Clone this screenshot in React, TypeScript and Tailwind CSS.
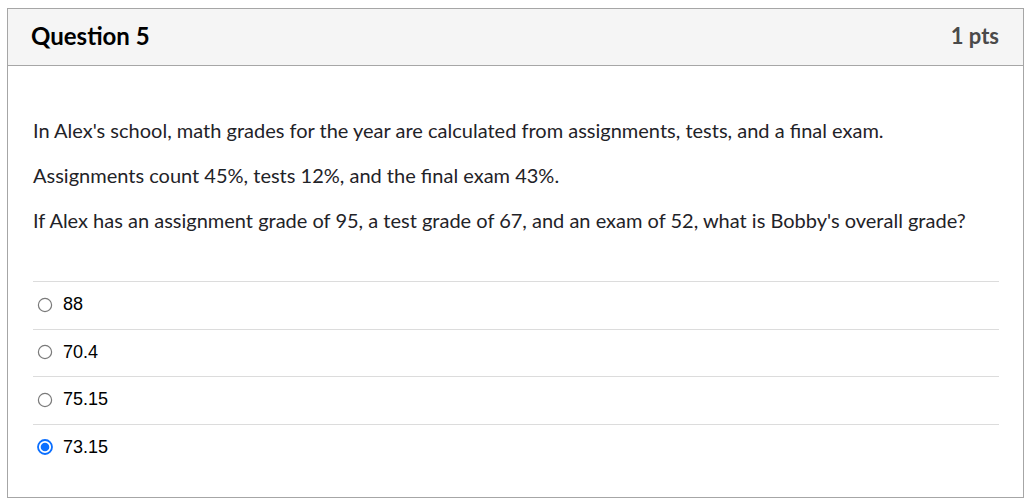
import React from "react";

const answers = [
  { label: "88", checked: false },
  { label: "70.4", checked: false },
  { label: "75.15", checked: false },
  { label: "73.15", checked: true },
];

function Radio({ checked }: { checked: boolean }) {
  return (
    <svg width="16" height="16" viewBox="0 0 16 16" className="shrink-0">
      {checked ? (
        <>
          <circle cx="8" cy="8" r="7" fill="white" stroke="#0b6fff" strokeWidth="1.8" />
          <circle cx="8" cy="8" r="4.3" fill="#0b6fff" />
        </>
      ) : (
        <circle cx="8" cy="8" r="6.6" fill="white" stroke="#7a7a7a" strokeWidth="1.2" />
      )}
    </svg>
  );
}

export default function App() {
  return (
    <div className="w-[1026px] h-[502px] bg-white pt-[8px] pl-[7px]" style={{ fontFamily: "Lato, 'Noto Sans', sans-serif" }}>
      <div className="w-[1017px] h-[490px] border border-[#a6a6a6] flex flex-col">
        <div className="h-[57px] bg-[#f5f5f5] border-b border-[#a6a6a6] flex items-center justify-between pl-[23px] pr-[24px] pb-[2px]">
          <div className="text-[24px] font-bold text-[#000] leading-none">Question 5</div>
          <div className="text-[22px] font-bold text-[#4a4a4a] leading-none">1 pts</div>
        </div>
        <div className="pl-[25px] pr-[24px] pt-[52px] text-[20px] text-[#1f2328]">
          <p className="leading-[24px] mb-[21px]">In Alex's school, math grades for the year are calculated from assignments, tests, and a final exam.</p>
          <p className="leading-[24px] mb-[21px]">Assignments count 45%, tests 12%, and the final exam 43%.</p>
          <p className="leading-[24px]">If Alex has an assignment grade of 95, a test grade of 67, and an exam of 52, what is Bobby's overall grade?</p>
          <div className="mt-[49px]" style={{ fontFamily: "'Liberation Sans', Arial, sans-serif" }}>
            {answers.map((a) => (
              <div key={a.label} className="border-t border-[#dcdcdc] h-[47.5px] flex items-center gap-[10px] pl-[4px] pb-[1px] text-[18px] text-[#000]">
                <Radio checked={a.checked} />
                <span>{a.label}</span>
              </div>
            ))}
          </div>
        </div>
      </div>
    </div>
  );
}
